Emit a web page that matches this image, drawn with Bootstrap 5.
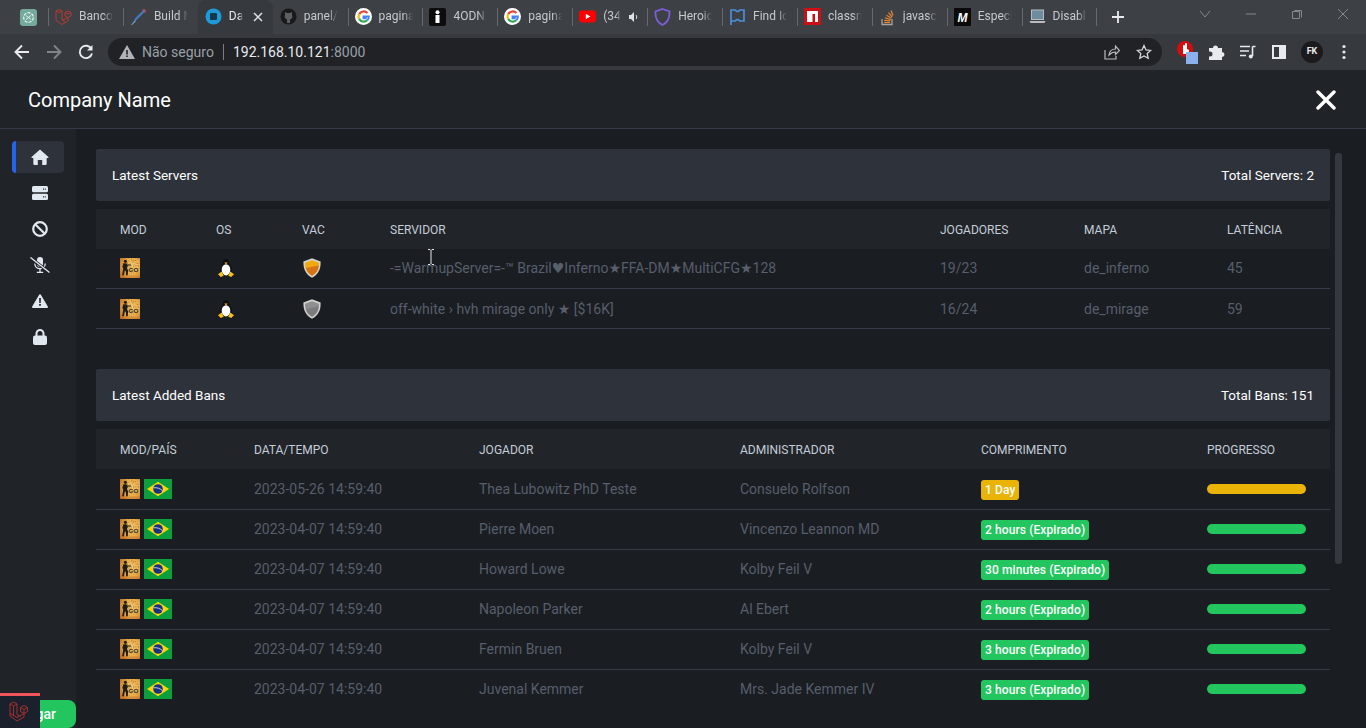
<!DOCTYPE html>
<html lang="pt-BR">
<head>
<meta charset="utf-8">
<title>Company Name</title>
<link href="https://cdn.jsdelivr.net/npm/bootstrap@5.3.0/dist/css/bootstrap.min.css" rel="stylesheet">
<style>
html,body{height:728px;overflow:hidden;background:#1a1d21;font-family:Roboto,"DejaVu Sans","Liberation Sans",sans-serif;font-size:14px}
.tabstrip{height:34px;background:#3d4145;color:#c6c9cc;font-size:12px}
.pinned{width:48px;height:34px;padding-left:20px;padding-top:8px;flex:none}
.tabitem{width:74.9px;height:34px;padding:8px 0 0 7px;position:relative;flex:none}
.tabitem::before,.plusbtn::before{content:"";position:absolute;left:0;top:8px;width:1px;height:18px;background:#666a6f}
.tabitem.nosep::before,.tabitem.current::before{display:none}
.tabitem.current{background:#363a3e;border-radius:8px 8px 0 0;color:#e8eaed}
.tabname{width:34px;margin-left:7px;overflow:hidden;white-space:nowrap;line-height:17px;-webkit-mask-image:linear-gradient(90deg,#000 72%,transparent);mask-image:linear-gradient(90deg,#000 72%,transparent)}
.tabname.tiny1{width:14px}
.tabname.tiny2{width:18px}
.tabitem svg{flex:none}
.tabclose{margin:4px 0 0 10px}
.tabsound{margin:4px 0 0 8px}
.plusbtn{position:relative;padding:10px 0 0 15px;flex:none}
.winctl{margin-left:auto;gap:34px;padding:8px 17px 0 0}
.toolbar{height:36px;background:#363a3e;padding-left:14px}
.toolbar svg,.toolbar .fkchip{flex:none}
.mg14{margin-left:14px}.mg7{margin-left:7px}.mg15{margin-left:15px}.mg16{margin-left:16px}.mg19{margin-left:19px}
.addr{width:1054px;height:28px;background:#202226;border-radius:14px;margin-left:14px;padding:0 10px 0 11px;font-size:14px;flex:none}
.addr .muted1{color:#9aa0a6}
.addr .host{color:#e8eaed}
.vline{width:1px;height:16px;background:#7b7f84;margin:0 9px}
.fkchip{width:22px;height:22px;background:#1c1a1c;color:#e8eaed;font-size:9px}
.appbar{height:59px;background:#202327;border-bottom:1px solid #343b47;padding:2px 28px 0;color:#fff;font-size:20px}
.closex{margin-right:2px}
.appbody{height:599px}
.sidenav{width:76px;background:#202327;padding-top:12px;position:relative;flex:none}
.navitem{width:52px;height:32px;margin:0 0 4px 12px;border-left:4px solid transparent;border-radius:4px}
.navitem.on{background:#2e323a;border-left-color:#2563eb}
.loginbtn{position:absolute;left:0;right:0;bottom:0;height:28px;background:#22c55e;color:#fff;font-weight:500;font-size:14px;border-radius:0 8px 8px 0;line-height:28px;text-align:center}
.lvbar{position:absolute;left:0;bottom:0;width:40px;height:35px;background:#1a202c;border-top:3px solid #f0545c}
.mainpane{padding:20px 0 0 20px;flex:1;min-width:0}
.blockarea{width:1234px;flex:none}
.blockhead{height:52px;background:#2e323a;border-radius:2px;color:#fff;font-size:13.5px;padding:0 16px;margin-bottom:8px}
.datatable{--bs-table-bg:transparent;--bs-table-border-color:#353b47;table-layout:fixed;border-collapse:separate;border-spacing:0;width:100%;margin:0 0 40px;font-size:14px}
.datatable th{background:#212529;color:#c4ccd8;font-weight:400;font-size:12px;height:40px;padding:1px 0 0 24px;vertical-align:middle;border:0;text-transform:uppercase}
.datatable td{height:40px;padding:0 0 0 24px;vertical-align:middle;background:transparent;color:#575e6c;white-space:nowrap;border:0;box-shadow:none}
.serverlist td{border-bottom:1px solid #353b47}
.serverlist tbody tr:first-child td{padding-bottom:1px}
.serverlist tbody tr+tr td{padding-top:1px}
.banlist tbody tr+tr td{border-top:1px solid #353b47;padding-bottom:1px}
.datatable td svg{display:block}
.serverlist col:nth-child(1){width:96px}.serverlist col:nth-child(2){width:86px}.serverlist col:nth-child(3){width:88px}.serverlist col:nth-child(4){width:550px}.serverlist col:nth-child(5){width:144px}.serverlist col:nth-child(6){width:143px}
.banlist col:nth-child(1){width:134px}.banlist col:nth-child(2){width:225px}.banlist col:nth-child(3){width:261px}.banlist col:nth-child(4){width:241px}.banlist col:nth-child(5){width:226px}
.datatable td svg.osmark{margin-left:2px}
.datatable td svg.vacmark{margin-left:1px}
.vacon{color:#f0aa10;--hatch:#c2451c}.vacoff{color:#8e8e8e;--hatch:#6e6e6e}
.hatchfill{fill:var(--hatch);fill-opacity:.55}
.tagpill{display:inline-block;height:20px;line-height:20px;padding:0 4px;border-radius:3px;color:#fff;font-size:12px;font-weight:500;letter-spacing:.1px}
.tagwarn{background:#eab308}
.tagdone{background:#22c55e}
.barwrap{width:99px;height:10px;border-radius:5px}
.thumbbar{width:7px;height:411px;margin:4px 0 0 5px;background:#33393f;border-radius:3px;flex:none}
.textcursor{position:absolute;left:427px;top:249px;pointer-events:none}
</style>
</head>
<body>
<svg width="0" height="0" class="position-absolute">
<defs>
<radialGradient id="gotex" cx=".6" cy=".42" r=".78"><stop offset="0" stop-color="#f5cd7c"/><stop offset=".55" stop-color="#ecaf4c"/><stop offset="1" stop-color="#bf5315"/></radialGradient>
<filter id="grain" x="0" y="0" width="1" height="1"><feTurbulence type="fractalNoise" baseFrequency=".8" numOctaves="2" seed="4"/><feColorMatrix values="0 0 0 0 .55 0 0 0 0 .25 0 0 0 0 .03 3 0 0 0 -1.300"/></filter>
<symbol id="csgo" viewBox="0 0 20 20"><rect width="20" height="20" fill="url(#gotex)"/><rect width="20" height="20" filter="url(#grain)"/><circle cx="5.400" cy="3.300" r="1.600" fill="#1f1d1c"/><path d="M3.300 5.200h3.200l.8 1.200h3.600v1.100H7.700l-.6 2.700 1 2.300-.4 4.800H6.100l-.2-3.800-1-1.500-1 5.300H2.200l1-7.100-.9-1.200z" fill="#1f1d1c"/><text x="8.600" y="14.200" font-family="Liberation Sans,sans-serif" font-weight="700" font-size="6.200" textLength="9.800" fill="#2f2c26">GO</text></symbol>
<symbol id="brflag" viewBox="0 0 28 20"><rect width="28" height="20" fill="#0d9f3c"/><path d="M14 2.800 25 10 14 17.200 3 10z" fill="#f7d708"/><circle cx="14" cy="10" r="4.800" fill="#1c2f86"/><path d="M9.400 8.800c3.500-.5 7 .6 9.100 3" fill="none" stroke="#e8eef0" stroke-width=".8"/></symbol>
<symbol id="tux" viewBox="0 0 16 18"><path d="M8 0c2 0 3 1.500 3 3.300 0 2 2.700 4.500 3 8.200l-1.500 3.500h-9L2 11.500C2.300 7.800 5 5.300 5 3.300 5 1.500 6 0 8 0z" fill="#0d0e10"/><ellipse cx="8" cy="10.800" rx="4.300" ry="5.600" fill="#fff"/><path d="M6.300 3.600h3.400L8 5.400z" fill="#f0b51d"/><path d="M0 15.200 3.700 12.500l2 4.300L2.800 18zM16 15.200 12.300 12.500l-2 4.300 2.900 1.200z" fill="#f8c21c"/></symbol>
<symbol id="shield" viewBox="0 0 18 20"><path d="M9 .3 17.600 3.400c.4 7.600-2.500 13.200-8.600 16.300C3 16.600.1 11 .4 3.400z" fill="#d2d2ce"/><path d="M9 2.300 15.900 4.800c.2 6.100-2 10.600-6.900 13C4.100 15.400 1.900 10.900 2.100 4.800z" fill="currentColor"/><path class="hatchfill" d="M15.800 7.500c-.4 4.500-2.600 8-6.800 10.300C6 16 4 13.500 3 10z"/></symbol>
<symbol id="gg" viewBox="0 0 18 18"><circle cx="9" cy="9" r="9" fill="#fff"/><path d="M13.200 5.200A5.600 5.600 0 0 0 4.400 6.500" fill="none" stroke="#ea4335" stroke-width="2.300"/><path d="M4.400 6.500a5.600 5.600 0 0 0 0 5" fill="none" stroke="#fbbc05" stroke-width="2.300"/><path d="M4.400 11.500A5.600 5.600 0 0 0 13 13" fill="none" stroke="#34a853" stroke-width="2.300"/><path d="M13 13c1.200-1 1.800-2.300 1.700-4H9v2h3.400" fill="none" stroke="#4285f4" stroke-width="2"/></symbol>
</defs>
</svg>

<div class="tabstrip d-flex">
  <div class="pinned"><svg width="17" height="17" viewBox="0 0 17 17"><rect width="17" height="17" rx="3" fill="#74aa9c"/><circle cx="8.500" cy="8.500" r="4.800" fill="none" stroke="#e6f2ef" stroke-width="1.300" stroke-dasharray="3 1.200"/><path d="M6 6.500l5 4M11 6.500l-5 4" stroke="#e6f2ef"/></svg></div>
  <div class="tabitem d-flex"><svg width="17" height="18" viewBox="0 0 17 18" fill="none" stroke="#b13a32" stroke-width="1"><path d="M1 3 4 1.500 7 3v9l3 1.500M1 3v9.500l6 4 6-3.500v-3.500L10 8V4.500L13 3l3 1.500v3.500L13 9.500 7 12.500M10 4.500l3 1.500 3-1.500M1 3l3 1.500L7 3"/></svg><div class="tabname">Banco</div></div>
  <div class="tabitem d-flex"><svg width="17" height="18" viewBox="0 0 17 18"><path d="M1 17 5 12l1 1-4 4z" fill="#7ba6d8"/><path d="M5 12 15 2" stroke="#3f7cc0" stroke-width="2.200"/><path d="M12 2l3 0 0 3" stroke="#d24b4b" fill="none"/></svg><div class="tabname">Build M</div></div>
  <div class="tabitem current d-flex"><svg width="17" height="17" viewBox="0 0 17 17"><circle cx="8.500" cy="8.500" r="8" fill="#1e9ad6"/><rect x="5" y="5" width="7" height="7" rx="1" fill="#15384d"/></svg><div class="tabname tiny1">Da</div><svg class="tabclose" width="10" height="10" viewBox="0 0 10 10"><path d="M1 1l8 8M9 1 1 9" stroke="#dfe1e4" stroke-width="1.500"/></svg></div>
  <div class="tabitem nosep d-flex"><svg width="17" height="17" viewBox="0 0 17 17"><circle cx="8.500" cy="8.500" r="8" fill="#17191b"/><path d="M5 4l2 1h3l2-1v3c1 2 0 4-2 4.500V15H7v-3.500C5 11 4 9 5 7z" fill="#5b5f63"/></svg><div class="tabname">panel/</div></div>
  <div class="tabitem d-flex"><svg width="17" height="17"><use href="#gg"/></svg><div class="tabname">pagina</div></div>
  <div class="tabitem d-flex"><svg width="17" height="18" viewBox="0 0 17 18"><rect width="17" height="18" rx="2" fill="#0c0c0c"/><rect x="6.500" y="7" width="4" height="8" fill="#fff"/><circle cx="8.500" cy="4.300" r="2" fill="#fff"/></svg><div class="tabname">4ODN</div></div>
  <div class="tabitem d-flex"><svg width="17" height="17"><use href="#gg"/></svg><div class="tabname">pagina</div></div>
  <div class="tabitem d-flex"><svg width="17" height="17" viewBox="0 0 17 17"><rect y="2.500" width="17" height="12" rx="3" fill="#f00"/><path d="M6.800 5.800v5.400l4.500-2.700z" fill="#fff"/></svg><div class="tabname tiny2">(34</div><svg class="tabsound" width="11" height="10" viewBox="0 0 11 10"><path d="M0 3h2l3-3v10L2 7H0z" fill="#dfe1e4"/><path d="M7 3c1 1 1 3 0 4" stroke="#dfe1e4" fill="none"/></svg></div>
  <div class="tabitem d-flex"><svg width="17" height="18" viewBox="0 0 17 18"><path d="M8.500 1 15.500 3.500c.4 6-2 11-7 13.500-5-2.500-7.400-7.500-7-13.500z" fill="none" stroke="#7c5fd6" stroke-width="1.800"/></svg><div class="tabname">Heroic</div></div>
  <div class="tabitem d-flex"><svg width="17" height="18" viewBox="0 0 17 18"><path d="M2 17V2h4l2 1.500h1L11 2h4v11h-4l-2-1.500H8L6 13H2" fill="none" stroke="#4a8fdc" stroke-width="1.700"/></svg><div class="tabname">Find Ic</div></div>
  <div class="tabitem d-flex"><svg width="17" height="17" viewBox="0 0 17 17"><rect width="17" height="17" fill="#cb0f16"/><path d="M3 3h11v11h-3V6H8.500v8H3z" fill="#fff"/></svg><div class="tabname">classna</div></div>
  <div class="tabitem d-flex"><svg width="17" height="18" viewBox="0 0 17 18"><path d="M3 11v5.500h10V11" fill="none" stroke="#a8a39b" stroke-width="1.300"/><path d="M5 14.500h6M5.200 12.300l6 .6M6 9.800l5.700 1.800M7.500 7.200l5 3M9.500 4.700l3.700 4.300M12 2.500l2 5" stroke="#e8882c" stroke-width="1.200"/></svg><div class="tabname">javascr</div></div>
  <div class="tabitem d-flex"><svg width="17" height="18" viewBox="0 0 17 18"><rect width="17" height="18" fill="#0a0a0a"/><text x="8.500" y="13.500" text-anchor="middle" font-family="Liberation Sans,sans-serif" font-style="italic" font-weight="700" font-size="12" fill="#fff">M</text></svg><div class="tabname">Especif</div></div>
  <div class="tabitem d-flex"><svg width="17" height="17" viewBox="0 0 17 17"><rect x="2.500" y="2" width="12" height="9.500" fill="#6d8ca0" stroke="#b9bcbe"/><path d="M.5 13h16l-1 2h-14z" fill="#b9bcbe"/></svg><div class="tabname">Disabl</div></div>
  <div class="plusbtn"><svg class="d-block" width="14" height="14" viewBox="0 0 14 14"><path d="M7 1v12M1 7h12" stroke="#e8eaed" stroke-width="1.800"/></svg></div>
  <div class="winctl d-flex align-items-start"><svg width="12" height="12" viewBox="0 0 12 12"><path d="M1 3l5 6 5-6" fill="none" stroke="#85898d"/></svg><svg width="12" height="12" viewBox="0 0 12 12"><path d="M1 6h10" stroke="#85898d"/></svg><svg width="12" height="12" viewBox="0 0 12 12"><path d="M3.500 2.500h7v7M1.500 3.500h7v7h-7z" fill="none" stroke="#85898d"/></svg><svg width="12" height="12" viewBox="0 0 12 12"><path d="M1 1l10 10M11 1 1 11" stroke="#85898d"/></svg></div>
</div>

<div class="toolbar d-flex align-items-center">
  <svg width="16" height="16" viewBox="0 0 16 16"><path d="M15 8H2M8 1.500 1.500 8 8 14.500" fill="none" stroke="#e8eaed" stroke-width="1.900"/></svg>
  <svg class="mg16" width="16" height="16" viewBox="0 0 16 16"><path d="M1 8h13M8 1.500 14.500 8 8 14.500" fill="none" stroke="#81858a" stroke-width="1.900"/></svg>
  <svg class="mg16" width="16" height="16" viewBox="0 0 16 16"><path d="M13.500 5A6.200 6.200 0 1 0 14 9.500" fill="none" stroke="#e8eaed" stroke-width="1.900"/><path d="M14.500 1v5.500H9z" fill="#e8eaed"/></svg>
  <div class="addr d-flex align-items-center">
    <svg width="16" height="14" viewBox="0 0 16 14"><path d="M8 0 16 14H0z" fill="#b0b4b8"/><path d="M7.200 5h1.600v4.500H7.200zM7.200 10.500h1.600V12H7.200z" fill="#202226"/></svg>
    <span class="muted1 mg7">Não seguro</span><span class="vline"></span><span class="host">192.168.10.121</span><span class="muted1">:8000</span>
    <svg class="ms-auto" width="16" height="16" viewBox="0 0 16 16" fill="none" stroke="#b8bcc0" stroke-width="1.200"><path d="M1 6v9h11v-3M5 11c.5-4 3-6 6.500-6V2L15.500 6.500l-4 4V8C9 8 6.800 9 5 11z"/></svg>
    <svg class="mg16" width="16" height="16" viewBox="0 0 16 16"><path d="M8 1.500l2 4.400 4.700.5-3.500 3.200 1 4.700L8 11.900l-4.200 2.400 1-4.700L1.300 6.400 6 5.900z" fill="none" stroke="#d4d6d9" stroke-width="1.300"/></svg>
  </div>
  <svg class="mg14" width="24" height="24" viewBox="0 0 24 24"><circle cx="9" cy="9" r="8" fill="#d30d0d"/><path d="M7 14V6a1 1 0 0 1 2 0V4a1 1 0 0 1 2 0v5l2 1v4z" fill="#fff"/><rect x="10" y="12" width="12" height="12" fill="#8ab0ee"/></svg>
  <svg class="mg7" width="18" height="18" viewBox="0 0 18 18"><path d="M2 5h4a2.500 2.500 0 0 1 5 0h4v4a2.500 2.500 0 0 1 0 5v3H2v-3.500h1a2.500 2.500 0 0 0 0-5H2z" fill="#e8eaed"/></svg>
  <svg class="mg15" width="16" height="16" viewBox="0 0 16 16"><path d="M0 2.500h10M0 7h9M0 11.500h6" stroke="#e8eaed" stroke-width="1.500"/><path d="M12.500 2.500h3M12.500 2.500V12" stroke="#e8eaed" stroke-width="1.600"/><circle cx="10.800" cy="12.500" r="2" fill="#e8eaed"/></svg>
  <svg class="mg16" width="14" height="14" viewBox="0 0 14 14"><rect x="1" y="1" width="12" height="12" fill="none" stroke="#e8eaed" stroke-width="2"/><rect x="7" y="1" width="6" height="12" fill="#e8eaed"/></svg>
  <span class="fkchip mg15 d-inline-flex align-items-center justify-content-center rounded-circle fw-bold">FK</span>
  <svg class="mg19" width="4" height="16" viewBox="0 0 4 16"><circle cx="2" cy="2.500" r="1.600" fill="#e8eaed"/><circle cx="2" cy="8" r="1.600" fill="#e8eaed"/><circle cx="2" cy="13.500" r="1.600" fill="#e8eaed"/></svg>
</div>

<header class="appbar d-flex align-items-center justify-content-between">
  <span>Company Name</span>
  <svg class="closex" width="20" height="20" viewBox="0 0 20 20"><path d="M2 2l16 16M18 2 2 18" stroke="#fff" stroke-width="3.400" stroke-linecap="round"/></svg>
</header>

<div class="appbody d-flex">
  <nav class="sidenav">
    <div class="navitem on d-flex align-items-center justify-content-center"><svg width="18" height="16" viewBox="0 0 20 18"><path d="M10 .5 19.500 9c.4.4.1 1-.4 1H17.500v7c0 .5-.4 1-1 1H12.500v-5.500h-5V18H3.500c-.6 0-1-.5-1-1v-7H.9c-.5 0-.8-.6-.4-1z" fill="#e2e8f0"/></svg></div>
    <div class="navitem d-flex align-items-center justify-content-center"><svg width="16" height="14" viewBox="0 0 16 14"><rect width="16" height="6.200" rx="1.500" fill="#e2e8f0"/><rect y="7.800" width="16" height="6.200" rx="1.500" fill="#e2e8f0"/><path d="M11 3.100h3M11 10.900h3" stroke="#202327" stroke-width="1.200" stroke-dasharray="1 .8"/></svg></div>
    <div class="navitem d-flex align-items-center justify-content-center"><svg width="16" height="16" viewBox="0 0 16 16"><circle cx="8" cy="8" r="6.800" fill="none" stroke="#e2e8f0" stroke-width="2.200"/><path d="M3.200 3.200l9.600 9.600" stroke="#e2e8f0" stroke-width="2.200"/></svg></div>
    <div class="navitem d-flex align-items-center justify-content-center"><svg width="20" height="16" viewBox="0 0 20 16"><rect x="7" y="0" width="6" height="10" rx="3" fill="#e2e8f0"/><path d="M4.800 6.500c0 3 2.300 5.200 5.200 5.200s5.200-2.200 5.200-5.200M10 11.500V15M6.800 15.300h6.400" fill="none" stroke="#e2e8f0" stroke-width="1.300"/><path d="M.5.800 19.500 15.500" stroke="#202327" stroke-width="3"/><path d="M.5.500 19.500 15.500" stroke="#e2e8f0" stroke-width="1.300"/></svg></div>
    <div class="navitem d-flex align-items-center justify-content-center"><svg width="16" height="14" viewBox="0 0 16 14"><path d="M8 .3c.5 0 .8.200 1 .6l6.800 11.500c.4.700-.1 1.500-.9 1.500H1.100c-.8 0-1.300-.8-.9-1.500L7 .9c.2-.4.500-.6 1-.6z" fill="#e2e8f0"/><path d="M7.100 4h1.800l-.2 5H7.300zM7.100 10h1.800v1.800H7.100z" fill="#202327"/></svg></div>
    <div class="navitem d-flex align-items-center justify-content-center"><svg width="14" height="16" viewBox="0 0 14 16"><path d="M3.500 7V4.500a3.500 3.500 0 0 1 7 0V7" fill="none" stroke="#e2e8f0" stroke-width="2"/><rect y="6.500" width="14" height="9.500" rx="2" fill="#e2e8f0"/></svg></div>
    <div class="loginbtn">Logar</div>
    <div class="lvbar d-flex align-items-center justify-content-center"><svg width="22" height="23" viewBox="0 0 22 23" fill="none" stroke="#b5312c" stroke-width=".9"><path d="M1 3 4.500 1 8 3v10.500l3.500 2M1 3v12l7 5 7-4v-3.500L11.500 10.500V6.500L15 4.500l3.500 2v4L15 12.500 8 16.500l-7-4M8 3 4.500 5 1 3M4.500 5v10M11.500 6.500 15 8.500l3.500-2M15 8.500v4"/></svg></div>
  </nav>

  <main class="mainpane d-flex align-items-start">
    <div class="blockarea">
      <section>
        <div class="blockhead d-flex align-items-center justify-content-between"><span>Latest Servers</span><span>Total Servers: 2</span></div>
        <table class="table datatable serverlist">
          <colgroup><col><col><col><col><col><col><col></colgroup>
          <thead><tr><th>Mod</th><th>OS</th><th>Vac</th><th>Servidor</th><th>Jogadores</th><th>Mapa</th><th>Latência</th></tr></thead>
          <tbody>
            <tr><td><svg width="20" height="20"><use href="#csgo"/></svg></td><td><svg class="osmark" width="16" height="18"><use href="#tux"/></svg></td><td><svg class="vacmark vacon" width="18" height="20"><use href="#shield"/></svg></td><td>-=WarmupServer=-™ Brazil♥Inferno★FFA-DM★MultiCFG★128</td><td>19/23</td><td>de_inferno</td><td>45</td></tr>
            <tr><td><svg width="20" height="20"><use href="#csgo"/></svg></td><td><svg class="osmark" width="16" height="18"><use href="#tux"/></svg></td><td><svg class="vacmark vacoff" width="18" height="20"><use href="#shield"/></svg></td><td>off-white › hvh mirage only ★ [$16K]</td><td>16/24</td><td>de_mirage</td><td>59</td></tr>
          </tbody>
        </table>
      </section>
      <section>
        <div class="blockhead d-flex align-items-center justify-content-between"><span>Latest Added Bans</span><span>Total Bans: 151</span></div>
        <table class="table datatable banlist">
          <colgroup><col><col><col><col><col><col></colgroup>
          <thead><tr><th>Mod/País</th><th>Data/Tempo</th><th>Jogador</th><th>Administrador</th><th>Comprimento</th><th>Progresso</th></tr></thead>
          <tbody>
            <tr><td><div class="d-flex gap-1"><svg width="20" height="20"><use href="#csgo"/></svg><svg width="28" height="20"><use href="#brflag"/></svg></div></td><td>2023-05-26 14:59:40</td><td>Thea Lubowitz PhD Teste</td><td>Consuelo Rolfson</td><td><span class="tagpill tagwarn">1 Day</span></td><td><div class="barwrap tagwarn"></div></td></tr>
            <tr><td><div class="d-flex gap-1"><svg width="20" height="20"><use href="#csgo"/></svg><svg width="28" height="20"><use href="#brflag"/></svg></div></td><td>2023-04-07 14:59:40</td><td>Pierre Moen</td><td>Vincenzo Leannon MD</td><td><span class="tagpill tagdone">2 hours (Expirado)</span></td><td><div class="barwrap tagdone"></div></td></tr>
            <tr><td><div class="d-flex gap-1"><svg width="20" height="20"><use href="#csgo"/></svg><svg width="28" height="20"><use href="#brflag"/></svg></div></td><td>2023-04-07 14:59:40</td><td>Howard Lowe</td><td>Kolby Feil V</td><td><span class="tagpill tagdone">30 minutes (Expirado)</span></td><td><div class="barwrap tagdone"></div></td></tr>
            <tr><td><div class="d-flex gap-1"><svg width="20" height="20"><use href="#csgo"/></svg><svg width="28" height="20"><use href="#brflag"/></svg></div></td><td>2023-04-07 14:59:40</td><td>Napoleon Parker</td><td>Al Ebert</td><td><span class="tagpill tagdone">2 hours (Expirado)</span></td><td><div class="barwrap tagdone"></div></td></tr>
            <tr><td><div class="d-flex gap-1"><svg width="20" height="20"><use href="#csgo"/></svg><svg width="28" height="20"><use href="#brflag"/></svg></div></td><td>2023-04-07 14:59:40</td><td>Fermin Bruen</td><td>Kolby Feil V</td><td><span class="tagpill tagdone">3 hours (Expirado)</span></td><td><div class="barwrap tagdone"></div></td></tr>
            <tr><td><div class="d-flex gap-1"><svg width="20" height="20"><use href="#csgo"/></svg><svg width="28" height="20"><use href="#brflag"/></svg></div></td><td>2023-04-07 14:59:40</td><td>Juvenal Kemmer</td><td>Mrs. Jade Kemmer IV</td><td><span class="tagpill tagdone">3 hours (Expirado)</span></td><td><div class="barwrap tagdone"></div></td></tr>
          </tbody>
        </table>
      </section>
    </div>
    <div class="thumbbar"></div>
  </main>
</div>
<svg class="textcursor" width="8" height="16" viewBox="0 0 8 16"><path d="M1 .5h2l1 1 1-1h2M1 15.500h2l1-1 1 1h2M4 1.500v13" fill="none" stroke="#e8e8e8"/></svg>
<script src="https://cdn.jsdelivr.net/npm/bootstrap@5.3.0/dist/js/bootstrap.bundle.min.js"></script>
</body>
</html>
